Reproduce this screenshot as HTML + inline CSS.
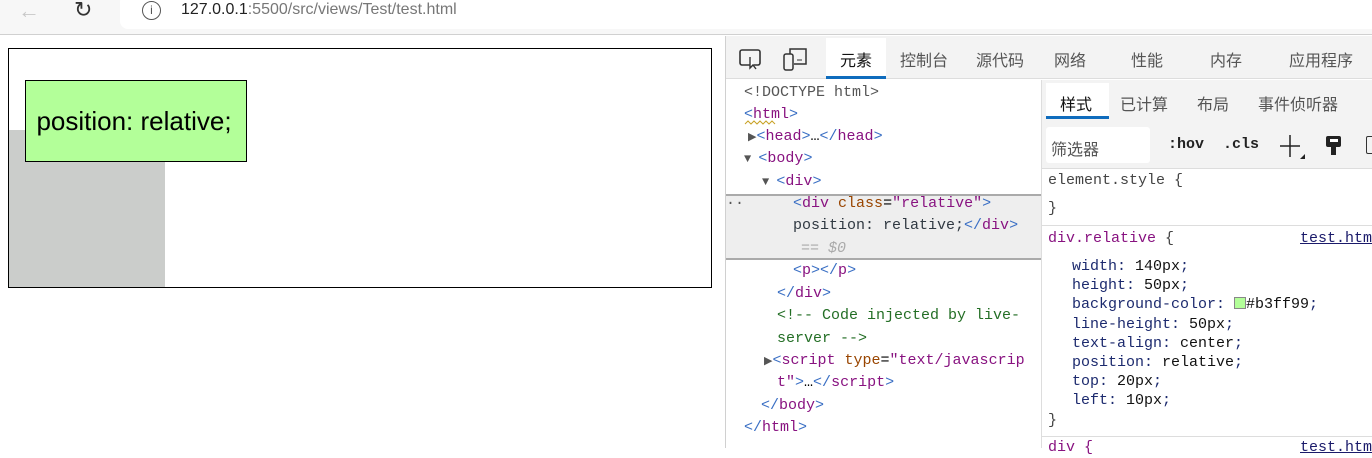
<!DOCTYPE html>
<html><head><style>
*{margin:0;padding:0;box-sizing:border-box}
body{width:1372px;height:448px;overflow:hidden;background:#fff;font-family:"Liberation Sans","Noto Sans CJK SC",sans-serif;position:relative}
.a{position:absolute;white-space:pre}
.m{font-family:"Liberation Mono",monospace;font-size:15px;line-height:20px}
.t{color:#881280}.b{color:#1c2a6e}.br{color:#3a6fc4}.at{color:#994500}.v{color:#a31515}.g{color:#236e25}.k{color:#303942}
.cn{font-size:16px;color:#555}
</style></head><body>
<div class="a" style="left:0;top:0;width:1372px;height:35px;background:#f7f7f7;border-bottom:1px solid #d0d0d0"></div>
<div class="a" style="left:120px;top:-6px;width:1260px;height:35px;background:#fff;border-radius:8px"></div>
<div class="a" style="left:18px;top:-2px;font-size:22px;color:#c8c8c8">←</div>
<div class="a" style="left:74px;top:-3px;font-size:22px;color:#333">↻</div>
<div class="a" style="left:142px;top:1px;width:19px;height:19px;border:1.5px solid #555;border-radius:50%;font-size:12px;text-align:center;line-height:16px;color:#555">i</div>
<div class="a" style="left:181px;top:1px;font-size:16px;color:#222">127.0.0.1<span style="color:#777">:5500/src/views/Test/test.html</span></div>

<div class="a" style="left:8px;top:48px;width:704px;height:240px;border:1px solid #000"></div>
<div class="a" style="left:9px;top:130px;width:156px;height:157px;background:#cbcdcb"></div>
<div class="a" style="left:25px;top:80px;width:222px;height:82px;background:#b3ff99;border:1px solid #000;font-size:26px;line-height:80px;text-align:center;padding-right:4px">position: relative;</div>

<div class="a" style="left:725px;top:36px;width:647px;height:412px;border-left:1px solid #d0d0d0;background:#fff"></div>
<div class="a" style="left:726px;top:36px;width:646px;height:43px;background:#f3f3f3;border-bottom:1px solid #ddd"></div>
<div class="a" style="left:826px;top:38px;width:60px;height:41px;background:#fff;border-bottom:3px solid #0f6cbd"></div>
<svg class="a" style="left:738px;top:48px" width="26" height="22"><rect x="2" y="2" width="20" height="15" rx="2" fill="none" stroke="#333" stroke-width="1.6"/><path d="M12 9 L12 20 L15 17 L18 21" fill="#fff" stroke="#333" stroke-width="1.4"/></svg>
<svg class="a" style="left:782px;top:46px" width="26" height="26"><rect x="2" y="8" width="9" height="16" rx="2" fill="none" stroke="#333" stroke-width="1.5"/><path d="M8 8 V3 H24 V18 H12" fill="none" stroke="#333" stroke-width="1.5"/><path d="M15 14 H20" stroke="#333"/></svg>
<div class="a cn" style="left:840px;top:47px;color:#111">元素</div>
<div class="a cn" style="left:900px;top:47px">控制台</div>
<div class="a cn" style="left:976px;top:47px">源代码</div>
<div class="a cn" style="left:1054px;top:47px">网络</div>
<div class="a cn" style="left:1131px;top:47px">性能</div>
<div class="a cn" style="left:1210px;top:47px">内存</div>
<div class="a cn" style="left:1289px;top:47px">应用程序</div>

<div class="a" style="left:1041px;top:80px;width:1px;height:368px;background:#ddd"></div>
<div class="a" style="left:726px;top:194px;width:315px;height:66px;background:#eee;border-top:2px solid #aaa;border-bottom:2px solid #aaa"></div>
<div class="a m" style="left:744px;top:83px;color:#555">&lt;!DOCTYPE html&gt;</div>
<div class="a m" style="left:744px;top:105px"><span class="br">&lt;</span><span class="t">html</span><span class="br">&gt;</span></div>
<svg class="a" style="left:744px;top:120px" width="40" height="6"><path d="M1 4 l3-3 3 3 3-3 3 3 3-3 3 3 3-3 3 3 3-3 3 3" fill="none" stroke="#c9a227" stroke-width="1"/></svg>
<div class="a m" style="left:748px;top:127px"><span style="color:#555;font-size:11px">▶</span><span class="br">&lt;</span><span class="t">head</span><span class="br">&gt;</span>…<span class="br">&lt;/</span><span class="t">head</span><span class="br">&gt;</span></div>
<div class="a m" style="left:744px;top:149px"><span style="color:#555;font-size:12px">▼ </span><span class="br">&lt;</span><span class="t">body</span><span class="br">&gt;</span></div>
<div class="a m" style="left:762px;top:172px"><span style="color:#555;font-size:12px">▼ </span><span class="br">&lt;</span><span class="t">div</span><span class="br">&gt;</span></div>
<div class="a m" style="left:726px;top:194px;color:#555">··</div>
<div class="a m" style="left:793px;top:194px"><span class="br">&lt;</span><span class="t">div</span> <span class="at">class</span>=<span class="t">"relative"</span><span class="br">&gt;</span></div>
<div class="a m" style="left:793px;top:216px"><span class="k">position: relative;</span><span class="br">&lt;/</span><span class="t">div</span><span class="br">&gt;</span></div>
<div class="a m" style="left:801px;top:239px;color:#aaa;font-style:italic">== $0</div>
<div class="a m" style="left:793px;top:261px"><span class="br">&lt;</span><span class="t">p</span><span class="br">&gt;&lt;/</span><span class="t">p</span><span class="br">&gt;</span></div>
<div class="a m" style="left:777px;top:284px"><span class="br">&lt;/</span><span class="t">div</span><span class="br">&gt;</span></div>
<div class="a m g" style="left:777px;top:306px">&lt;!-- Code injected by live-</div>
<div class="a m g" style="left:777px;top:329px">server --&gt;</div>
<div class="a m" style="left:764px;top:351px"><span style="color:#555;font-size:11px">▶</span><span class="br">&lt;</span><span class="t">script</span> <span class="at">type</span>=<span class="t">"text/javascrip</span></div>
<div class="a m" style="left:777px;top:373px"><span class="t">t"</span><span class="br">&gt;</span>…<span class="br">&lt;/</span><span class="t">script</span><span class="br">&gt;</span></div>
<div class="a m" style="left:761px;top:396px"><span class="br">&lt;/</span><span class="t">body</span><span class="br">&gt;</span></div>
<div class="a m" style="left:744px;top:418px"><span class="br">&lt;/</span><span class="t">html</span><span class="br">&gt;</span></div>

<div class="a" style="left:1042px;top:80px;width:330px;height:88px;background:#f3f3f3"></div>
<div class="a" style="left:1046px;top:83px;width:63px;height:36px;background:#fff;border-bottom:3px solid #0f6cbd"></div>
<div class="a cn" style="left:1060px;top:91px;color:#111">样式</div>
<div class="a cn" style="left:1120px;top:91px">已计算</div>
<div class="a cn" style="left:1197px;top:91px">布局</div>
<div class="a cn" style="left:1258px;top:91px">事件侦听器</div>
<div class="a" style="left:1046px;top:127px;width:104px;height:36px;background:#fff;border-radius:3px"></div>
<div class="a cn" style="left:1051px;top:136px">筛选器</div>
<div class="a" style="left:1168px;top:136px;font-family:'Liberation Mono',monospace;font-weight:bold;font-size:15px;color:#222">:hov</div>
<div class="a" style="left:1223px;top:136px;font-family:'Liberation Mono',monospace;font-weight:bold;font-size:15px;color:#222">.cls</div>
<svg class="a" style="left:1278px;top:133px" width="30" height="28"><path d="M12 2 V24 M2 13 H22" stroke="#222" stroke-width="1.5"/><path d="M22 26 L27 21 L27 26Z" fill="#222"/></svg>
<svg class="a" style="left:1324px;top:134px" width="20" height="24"><rect x="2" y="2" width="15" height="11" rx="2" fill="#222"/><rect x="6" y="5" width="8" height="3" fill="#fff"/><rect x="7" y="13" width="5" height="8" fill="#222"/></svg>
<div class="a" style="left:1366px;top:136px;width:10px;height:18px;border:1.5px solid #333;border-radius:2px"></div>
<div class="a" style="left:1042px;top:168px;width:330px;height:1px;background:#ddd"></div>
<div class="a m k" style="left:1048px;top:171px;color:#444">element.style {</div>
<div class="a m k" style="left:1048px;top:199px;color:#444">}</div>
<div class="a" style="left:1042px;top:225px;width:330px;height:1px;background:#ddd"></div>
<div class="a m" style="left:1048px;top:229px"><span class="t">div.relative</span> <span style="color:#444">{</span></div>
<div class="a m" style="left:1300px;top:229px;color:#1a1a6a;text-decoration:underline">test.html</div>
<div class="a m b" style="left:1072px;top:257px;line-height:19.2px">width: <span style="color:#111">140px</span>;
height: <span style="color:#111">50px</span>;
background-color: <span style="display:inline-block;width:12px;height:12px;background:#b3ff99;border:1px solid #888;vertical-align:-1px"></span><span style="color:#111">#b3ff99</span>;
line-height: <span style="color:#111">50px</span>;
text-align: <span style="color:#111">center</span>;
position: <span style="color:#111">relative</span>;
top: <span style="color:#111">20px</span>;
left: <span style="color:#111">10px</span>;</div>
<div class="a m" style="left:1048px;top:411px;color:#444">}</div>
<div class="a" style="left:1042px;top:436px;width:330px;height:1px;background:#ddd"></div>
<div class="a m t" style="left:1048px;top:438px">div {</div>
<div class="a m" style="left:1300px;top:438px;color:#1a1a6a;text-decoration:underline">test.html</div>
</body></html>
